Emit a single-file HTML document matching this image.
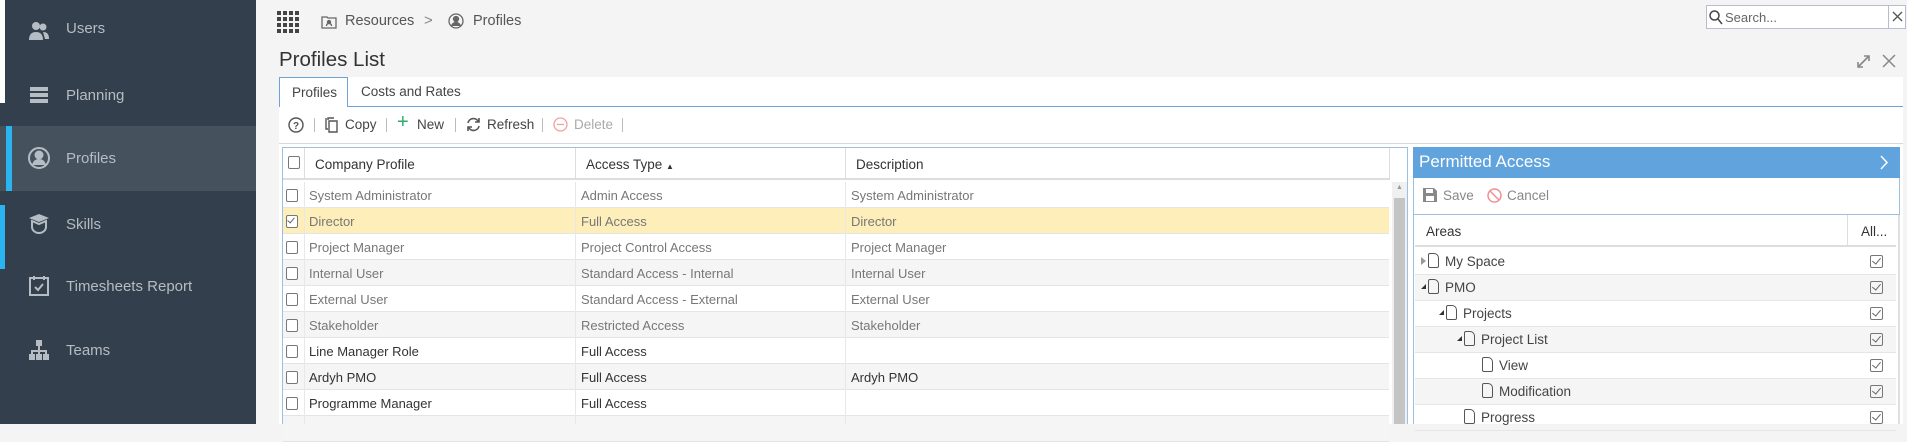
<!DOCTYPE html><html><head><meta charset="utf-8"><style>
*{box-sizing:border-box;margin:0;padding:0}
body{width:1907px;height:424px;overflow:hidden;background:#f4f4f4;font-family:"Liberation Sans",sans-serif;font-size:13px;color:#333;position:relative}
.a{position:absolute}
.sb{left:0;top:0;width:256px;height:424px;background:#333f4c}
.it{position:absolute;left:0;width:256px;height:64px}
.it span{position:absolute;left:66px;top:22px;font-size:15px;color:#b6bcc4}
.it svg{position:absolute;left:28px;top:20px}
.cb{position:absolute;width:12px;height:13px;border:1.5px solid #777;border-radius:2px;background:#fff}
.row{position:absolute;left:283px;width:1106px;height:26px;border-bottom:1px solid #e4e4e4}
.row div{position:absolute;top:6px;color:#777}
.row.d div{color:#333}
.tr{position:absolute;left:1415px;width:481px;height:26px;border-bottom:1px solid #e6e6e6}
.tr span{position:absolute;top:5px;color:#444;font-size:13.5px}
.doc{position:absolute;top:4px;width:11px;height:15px;border:1.3px solid #555;border-radius:2px 5px 2px 2px}
.ck{position:absolute;left:455px;top:6px;width:13px;height:13px;border:1.5px solid #777;border-radius:2px}
.ck:after{content:"";position:absolute;left:3px;top:0px;width:4px;height:7px;border:solid #666;border-width:0 1.5px 1.5px 0;transform:rotate(40deg)}
.tri{position:absolute;top:9px;width:0;height:0;border-left:5px solid transparent;border-bottom:5px solid #333}
</style></head><body>
<div class="a sb">
<div class="a" style="left:0;top:0;width:5px;height:103px;background:#fff"></div>
<div class="it" style="top:0"><svg width="22" height="22" viewBox="0 0 22 22" fill="#b6bcc4"><circle cx="8" cy="6" r="4"/><path d="M1 20c0-6 3-8 7-8s7 2 7 8z"/><circle cx="15" cy="7" r="3.5"/><path d="M15 12c4 0 6 2 6 7h-4z"/></svg><span style="top:20px">Users</span></div>
<div class="it" style="top:64px"><svg width="22" height="22" viewBox="0 0 22 22" fill="#b6bcc4"><rect x="2" y="3" width="18" height="4"/><rect x="2" y="9" width="18" height="4"/><rect x="2" y="15" width="18" height="4"/></svg><span style="top:23px">Planning</span></div>
<div class="it" style="top:126px;height:65px;background:#46515e"><div class="a" style="left:6px;top:0;width:6px;height:65px;background:#2ab4f0"></div><svg width="22" height="24" viewBox="0 0 22 24" fill="none" stroke="#b6bcc4" stroke-width="2"><circle cx="11" cy="12" r="10"/><circle cx="11" cy="9" r="3.5" fill="#b6bcc4"/><path d="M5 19c1-4 3-5 6-5s5 1 6 5" fill="#b6bcc4"/></svg><span style="top:24px">Profiles</span></div>
<div class="it" style="top:191px;height:78px"><div class="a" style="left:0;top:14px;width:5px;height:64px;background:#2ab4f0"></div><svg width="22" height="22" viewBox="0 0 22 22" fill="#b6bcc4" style="top:22px"><path d="M11 1l10 4-10 4L1 5z"/><path d="M4 8v6c0 3 3 6 7 6s7-3 7-6V8l-7 3z" fill="none" stroke="#b6bcc4" stroke-width="2"/></svg><span style="top:25px">Skills</span></div>
<div class="it" style="top:255px"><svg width="22" height="22" viewBox="0 0 22 22" fill="none" stroke="#b6bcc4" stroke-width="2"><rect x="2" y="3" width="18" height="17"/><path d="M6 1v4M16 1v4M7 12l3 3 5-6"/></svg><span style="top:23px">Timesheets Report</span></div>
<div class="it" style="top:319px"><svg width="22" height="22" viewBox="0 0 22 22" fill="#b6bcc4"><rect x="8" y="1" width="6" height="6"/><rect x="1" y="15" width="6" height="6"/><rect x="8" y="15" width="6" height="6"/><rect x="15" y="15" width="6" height="6"/><path d="M10 7h2v4h7v4h-2v-2H12v2h-2v-2H5v2H3v-4h7z"/></svg><span style="top:23px">Teams</span></div>
</div>
<svg class="a" style="left:277px;top:11px" width="22" height="22" viewBox="0 0 22 22" fill="#444"><g><rect x="0" y="0" width="4" height="4"/><rect x="6" y="0" width="4" height="4"/><rect x="12" y="0" width="4" height="4"/><rect x="18" y="0" width="4" height="4"/><rect x="0" y="6" width="4" height="4"/><rect x="6" y="6" width="4" height="4"/><rect x="12" y="6" width="4" height="4"/><rect x="18" y="6" width="4" height="4"/><rect x="0" y="12" width="4" height="4"/><rect x="6" y="12" width="4" height="4"/><rect x="12" y="12" width="4" height="4"/><rect x="18" y="12" width="4" height="4"/><rect x="0" y="18" width="4" height="4"/><rect x="6" y="18" width="4" height="4"/><rect x="12" y="18" width="4" height="4"/><rect x="18" y="18" width="4" height="4"/></g></svg>
<svg class="a" style="left:321px;top:14px" width="16" height="15" viewBox="0 0 16 15" fill="none" stroke="#666" stroke-width="1.3"><path d="M1 3h5l1 1h8v10H1z"/><circle cx="8" cy="8" r="1.5" fill="#666"/><path d="M5.5 12c0-2 1-2.5 2.5-2.5s2.5.5 2.5 2.5"/></svg>
<div class="a" style="left:345px;top:13px;font-size:14.5px;color:#555">Resources</div>
<div class="a" style="left:424px;top:12px;font-size:15px;color:#888">&gt;</div>
<svg class="a" style="left:448px;top:13px" width="16" height="16" viewBox="0 0 16 16" fill="none" stroke="#666" stroke-width="1.3"><circle cx="8" cy="8" r="7"/><circle cx="8" cy="6" r="2.5" fill="#666"/><path d="M3.5 13c1-3 2.5-3.5 4.5-3.5s3.5.5 4.5 3.5" fill="#666"/></svg>
<div class="a" style="left:473px;top:13px;font-size:14.5px;color:#555">Profiles</div>
<div class="a" style="left:1706px;top:5px;width:200px;height:24px;border:1px solid #b8bcd0;background:#fff"></div>
<div class="a" style="left:1888px;top:5px;width:1px;height:24px;background:#b8bcd0"></div>
<svg class="a" style="left:1709px;top:10px" width="14" height="15" viewBox="0 0 14 15" fill="none" stroke="#444" stroke-width="1.5"><circle cx="5.5" cy="5.5" r="4.5"/><path d="M9 9l4 5"/></svg>
<div class="a" style="left:1725px;top:10px;font-size:13px;color:#666">Search...</div>
<svg class="a" style="left:1892px;top:11px" width="11" height="11" viewBox="0 0 11 11" stroke="#555" stroke-width="1.3"><path d="M1 1l9 9M10 1L1 10"/></svg>
<div class="a" style="left:279px;top:48px;font-size:20.5px;color:#333">Profiles List</div>
<svg class="a" style="left:1856px;top:54px" width="15" height="15" viewBox="0 0 15 15" fill="none" stroke="#888" stroke-width="1.6"><path d="M2 13L13 2M8 2h5v5M2 8v5h5"/></svg>
<svg class="a" style="left:1882px;top:54px" width="14" height="14" viewBox="0 0 14 14" stroke="#888" stroke-width="1.5"><path d="M1 1l12 12M13 1L1 13"/></svg>
<div class="a" style="left:279px;top:77px;width:1624px;height:347px;background:#fff"></div>
<div class="a" style="left:279px;top:106px;width:1624px;height:1px;background:#6fa3d8"></div>
<div class="a" style="left:279px;top:77px;width:69px;height:30px;background:#fff;border:1px solid #6fa3d8;border-bottom:none"></div>
<div class="a" style="left:292px;top:85px;font-size:13.5px;color:#444">Profiles</div>
<div class="a" style="left:361px;top:84px;font-size:13.5px;color:#444">Costs and Rates</div>
<div class="a" style="left:279px;top:143px;width:1624px;height:1px;background:#d8d8d8"></div>
<svg class="a" style="left:288px;top:117px" width="16" height="16" viewBox="0 0 16 16" fill="none" stroke="#555" stroke-width="1.4"><circle cx="8" cy="8" r="7"/><text x="5" y="12" font-size="10" fill="#555" stroke="none" font-family="Liberation Sans" font-weight="bold">?</text></svg>
<div class="a" style="left:314px;top:118px;width:1px;height:14px;background:#bbb"></div>
<svg class="a" style="left:325px;top:117px" width="13" height="16" viewBox="0 0 13 16" fill="none" stroke="#555" stroke-width="1.4"><path d="M3 3V1h6M4 4h8v11H4z"/><path d="M1 1v11h2"/></svg>
<div class="a" style="left:345px;top:117px;color:#444;font-size:13.5px">Copy</div>
<div class="a" style="left:386px;top:118px;width:1px;height:14px;background:#bbb"></div>
<div class="a" style="left:397px;top:111px;color:#2eae6b;font-size:20px">+</div>
<div class="a" style="left:417px;top:117px;color:#444;font-size:13.5px">New</div>
<div class="a" style="left:455px;top:118px;width:1px;height:14px;background:#bbb"></div>
<svg class="a" style="left:466px;top:117px" width="15" height="15" viewBox="0 0 15 15" fill="none" stroke="#555" stroke-width="1.6"><path d="M12.5 5A5.5 5.5 0 0 0 2 6M2.5 10A5.5 5.5 0 0 0 13 9"/><path d="M13 1v4H9M2 14v-4h4"/></svg>
<div class="a" style="left:487px;top:117px;color:#444;font-size:13.5px">Refresh</div>
<div class="a" style="left:542px;top:118px;width:1px;height:14px;background:#bbb"></div>
<svg class="a" style="left:553px;top:117px" width="15" height="15" viewBox="0 0 15 15" fill="none" stroke="#f0a0a0" stroke-width="1.3"><circle cx="7.5" cy="7.5" r="6.5"/><path d="M4 7.5h7"/></svg>
<div class="a" style="left:574px;top:117px;color:#aaa;font-size:13.5px">Delete</div>
<div class="a" style="left:622px;top:118px;width:1px;height:14px;background:#bbb"></div>
<div class="a" style="left:282px;top:147px;width:1126px;height:277px;border:1px solid #9dbfe3;border-bottom:none"></div>
<div class="a" style="left:283px;top:148px;width:1106px;height:32px;background:#fff;border-bottom:2px solid #ddd"></div>
<div class="a" style="left:304px;top:148px;width:1px;height:32px;background:#ddd"></div>
<div class="a" style="left:575px;top:148px;width:1px;height:32px;background:#ddd"></div>
<div class="a" style="left:845px;top:148px;width:1px;height:32px;background:#ddd"></div>
<div class="a" style="left:1389px;top:148px;width:1px;height:32px;background:#ddd"></div>
<div class="cb" style="left:288px;top:156px"></div>
<div class="a" style="left:315px;top:157px;font-size:13.5px">Company Profile</div>
<div class="a" style="left:586px;top:157px;font-size:13.5px">Access Type <span style="font-size:8px">▲</span></div>
<div class="a" style="left:856px;top:157px;font-size:13.5px">Description</div>
<div class="a" style="left:1392px;top:182px;width:15px;height:242px;background:#f0f0f0"></div>
<div class="a" style="left:1394px;top:198px;width:11px;height:226px;background:#c4c4c4"></div>
<div class="a" style="left:1396px;top:184px;font-size:7px;color:#999">▲</div>
<div class="row" style="top:182px;background:#fff"><div style="left:26px">System Administrator</div><div style="left:298px">Admin Access</div><div style="left:568px">System Administrator</div></div>
<div class="row" style="top:208px;background:#fdeeba"><div style="left:26px">Director</div><div style="left:298px">Full Access</div><div style="left:568px">Director</div></div>
<div class="row" style="top:234px;background:#fff"><div style="left:26px">Project Manager</div><div style="left:298px">Project Control Access</div><div style="left:568px">Project Manager</div></div>
<div class="row" style="top:260px;background:#f5f5f5"><div style="left:26px">Internal User</div><div style="left:298px">Standard Access - Internal</div><div style="left:568px">Internal User</div></div>
<div class="row" style="top:286px;background:#fff"><div style="left:26px">External User</div><div style="left:298px">Standard Access - External</div><div style="left:568px">External User</div></div>
<div class="row" style="top:312px;background:#f5f5f5"><div style="left:26px">Stakeholder</div><div style="left:298px">Restricted Access</div><div style="left:568px">Stakeholder</div></div>
<div class="row d" style="top:338px;background:#fff"><div style="left:26px">Line Manager Role</div><div style="left:298px">Full Access</div></div>
<div class="row d" style="top:364px;background:#f5f5f5"><div style="left:26px">Ardyh PMO</div><div style="left:298px">Full Access</div><div style="left:568px">Ardyh PMO</div></div>
<div class="row d" style="top:390px;background:#fff"><div style="left:26px">Programme Manager</div><div style="left:298px">Full Access</div></div>
<div class="row" style="top:416px;background:#f5f5f5"></div>
<div class="a" style="left:304px;top:182px;width:1px;height:242px;background:#e8e8e8"></div>
<div class="a" style="left:575px;top:182px;width:1px;height:242px;background:#e8e8e8"></div>
<div class="a" style="left:845px;top:182px;width:1px;height:242px;background:#e8e8e8"></div>
<div class="cb" style="left:286px;top:189px"></div>
<div class="cb" style="left:286px;top:215px"><div style="position:absolute;left:2px;top:0;width:4px;height:7px;border:solid #666;border-width:0 1.5px 1.5px 0;transform:rotate(40deg)"></div></div>
<div class="cb" style="left:286px;top:241px"></div><div class="cb" style="left:286px;top:267px"></div><div class="cb" style="left:286px;top:293px"></div><div class="cb" style="left:286px;top:319px"></div><div class="cb" style="left:286px;top:345px"></div><div class="cb" style="left:286px;top:371px"></div><div class="cb" style="left:286px;top:397px"></div>
<div class="a" style="left:1413px;top:147px;width:487px;height:277px;border:1px solid #9dbfe3;border-bottom:none;background:#fff"></div>
<div class="a" style="left:1413px;top:147px;width:487px;height:31px;background:#60a3dd"></div>
<div class="a" style="left:1419px;top:152px;font-size:17px;color:#fff">Permitted Access</div>
<svg class="a" style="left:1880px;top:155px" width="9" height="15" viewBox="0 0 9 15" fill="none" stroke="#fff" stroke-width="1.5"><path d="M1 1l6 6.5L1 14"/></svg>
<svg class="a" style="left:1423px;top:188px" width="14" height="14" viewBox="0 0 14 14" fill="#888"><path d="M0 0h11l3 3v11H0z"/><rect x="3" y="1" width="7" height="4" fill="#fff"/><rect x="3" y="8" width="8" height="5" fill="#fff"/></svg>
<div class="a" style="left:1443px;top:188px;color:#888;font-size:13.5px">Save</div>
<svg class="a" style="left:1487px;top:188px" width="15" height="15" viewBox="0 0 15 15" fill="none" stroke="#ef8f8f" stroke-width="1.5"><circle cx="7.5" cy="7.5" r="6.5"/><path d="M3 3l9 9"/></svg>
<div class="a" style="left:1507px;top:188px;color:#888;font-size:13.5px">Cancel</div>
<div class="a" style="left:1414px;top:214px;width:485px;height:1px;background:#9dbfe3"></div>
<div class="a" style="left:1415px;top:215px;width:481px;height:32px;border-bottom:2px solid #ddd"></div>
<div class="a" style="left:1847px;top:215px;width:1px;height:32px;background:#ddd"></div>
<div class="a" style="left:1426px;top:224px;font-size:13.5px">Areas</div>
<div class="a" style="left:1861px;top:224px;font-size:13.5px">All...</div>
<div class="a" style="left:1898px;top:215px;width:2px;height:209px;background:#e0e0e0"></div>
<div class="tr" style="top:249px"><div style="position:absolute;left:6px;top:8px;width:0;height:0;border-top:4px solid transparent;border-bottom:4px solid transparent;border-left:5px solid #999"></div><div class="doc" style="left:13px"></div><span style="left:30px">My Space</span><div class="ck"></div></div>
<div class="tr" style="top:275px;background:#f5f5f5"><div class="tri" style="left:6px"></div><div class="doc" style="left:13px"></div><span style="left:30px">PMO</span><div class="ck"></div></div>
<div class="tr" style="top:301px"><div class="tri" style="left:24px"></div><div class="doc" style="left:31px"></div><span style="left:48px">Projects</span><div class="ck"></div></div>
<div class="tr" style="top:327px;background:#f5f5f5"><div class="tri" style="left:42px"></div><div class="doc" style="left:49px"></div><span style="left:66px">Project List</span><div class="ck"></div></div>
<div class="tr" style="top:353px"><div class="doc" style="left:67px"></div><span style="left:84px">View</span><div class="ck"></div></div>
<div class="tr" style="top:379px;background:#f5f5f5"><div class="doc" style="left:67px"></div><span style="left:84px">Modification</span><div class="ck"></div></div>
<div class="tr" style="top:405px"><div class="doc" style="left:49px"></div><span style="left:66px">Progress</span><div class="ck"></div></div>
</body></html>
